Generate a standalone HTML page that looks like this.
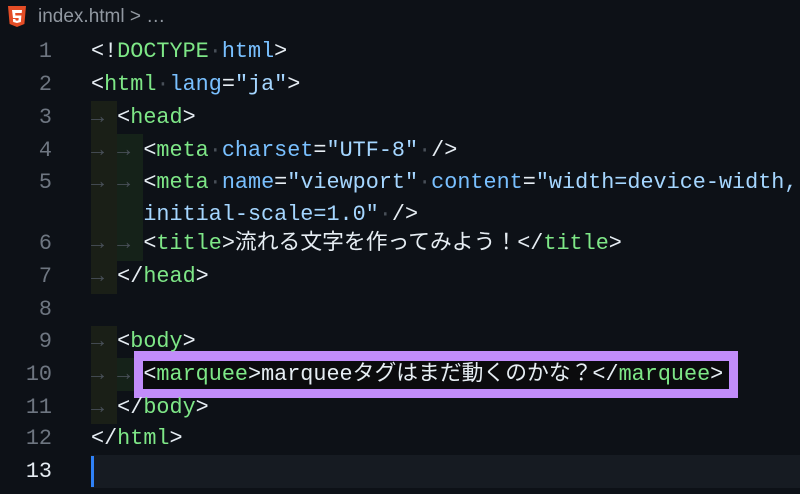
<!DOCTYPE html>
<html><head><meta charset="utf-8"><style>
body{margin:0;width:800px;height:494px;background:#0d1117;overflow:hidden;position:relative;font-family:"Liberation Mono","Noto Sans CJK JP",monospace;font-size:21.8px;color:#e6edf3}
.top{position:absolute;left:0;top:0;width:800px;height:35px;background:#0d1117;font-family:"Liberation Sans",sans-serif;font-size:19px;color:#9198a1}
.l{position:absolute;left:0;height:33px;line-height:33px;white-space:pre;width:800px}
.n{position:absolute;left:0;width:52px;text-align:right;color:#6e7681}
.c{position:absolute;left:91px}
.t{color:#7ee787}.a{color:#79c0ff}.s{color:#a5d6ff}.d{color:#484f58}
.j{letter-spacing:0}
.g1{position:absolute;left:91px;width:26px;background:#1a1f17}
.g2{position:absolute;left:117px;width:26px;background:#152219}
</style></head><body>
<div class="top"><svg style="position:absolute;left:8px;top:6px" width="18" height="21" viewBox="0 0 18 21"><path d="M0 0h18l-1.6 18L9 21l-7.4-3z" fill="#e44d26"/><path d="M4 4h10l-.3 3H7.2l.2 2.5h6l-.6 6.5L9 17l-3.8-1-.3-3h2.5l.1 1.3 1.5.4 1.5-.4.2-2.3H5z" fill="#fff"/></svg><span style="position:absolute;left:38px;top:6px">index.html &gt; …</span></div>
<div class="g1" style="top:101px;height:193px"></div>
<div class="g2" style="top:134px;height:127px"></div>
<div class="g1" style="top:326px;height:98px"></div>
<div class="g2" style="top:358px;height:33px"></div>
<div style="position:absolute;left:91px;top:455px;width:709px;height:33px;background:#161b22"></div>
<div style="position:absolute;left:91px;top:456px;width:3px;height:31px;background:#2f81f7"></div>
<div style="position:absolute;left:134px;top:351px;width:604px;height:47px;box-sizing:border-box;border:9px solid #c18cfa;border-top-width:10px;background:#0b0b0d"></div>
<div class="l" style="top:35px"><span class="n">1</span><span class="c">&lt;!<span class="t">DOCTYPE</span><span class="d">·</span><span class="a">html</span>&gt;</span></div>
<div class="l" style="top:68px"><span class="n">2</span><span class="c">&lt;<span class="t">html</span><span class="d">·</span><span class="a">lang</span>=<span class="s">"ja"</span>&gt;</span></div>
<div class="l" style="top:101px"><span class="n">3</span><span class="c"><span class="d">→ </span>&lt;<span class="t">head</span>&gt;</span></div>
<div class="l" style="top:134px"><span class="n">4</span><span class="c"><span class="d">→ → </span>&lt;<span class="t">meta</span><span class="d">·</span><span class="a">charset</span>=<span class="s">"UTF-8"</span><span class="d">·</span>/&gt;</span></div>
<div class="l" style="top:166px"><span class="n">5</span><span class="c"><span class="d">→ → </span>&lt;<span class="t">meta</span><span class="d">·</span><span class="a">name</span>=<span class="s">"viewport"</span><span class="d">·</span><span class="a">content</span>=<span class="s">"width=device-width,</span><span class="d">·</span></span></div>
<div class="l" style="top:198px"><span class="c"><span class="s">    initial-scale=1.0"</span><span class="d">·</span>/&gt;</span></div>
<div class="l" style="top:227px"><span class="n">6</span><span class="c"><span class="d">→ → </span>&lt;<span class="t">title</span>&gt;<span class="j">流れる文字を作ってみよう！</span>&lt;/<span class="t">title</span>&gt;</span></div>
<div class="l" style="top:260px"><span class="n">7</span><span class="c"><span class="d">→ </span>&lt;/<span class="t">head</span>&gt;</span></div>
<div class="l" style="top:293px"><span class="n">8</span></div>
<div class="l" style="top:325px"><span class="n">9</span><span class="c"><span class="d">→ </span>&lt;<span class="t">body</span>&gt;</span></div>
<div class="l" style="top:358px"><span class="n">10</span><span class="c"><span class="d">→ → </span>&lt;<span class="t">marquee</span>&gt;marquee<span class="j">タグはまだ動くのかな？</span>&lt;/<span class="t">marquee</span>&gt;</span></div>
<div class="l" style="top:391px"><span class="n">11</span><span class="c"><span class="d">→ </span>&lt;/<span class="t">body</span>&gt;</span></div>
<div class="l" style="top:422px"><span class="n">12</span><span class="c">&lt;/<span class="t">html</span>&gt;</span></div>
<div class="l" style="top:455px"><span class="n" style="color:#e6edf3">13</span></div>
</body></html>
